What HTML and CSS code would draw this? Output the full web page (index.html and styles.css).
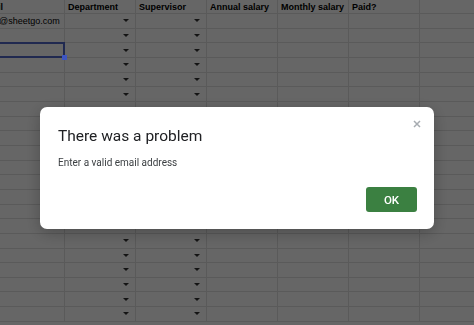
FILE: index.html
```html
<!DOCTYPE html>
<html lang="en">
<head>
    <meta charset="UTF-8">
    <meta name="viewport" content="width=device-width, initial-scale=1.0">
    <title>Employees - Sheet</title>
    <link rel="stylesheet" href="styles.css">
</head>
<body>
    <div class="sheet">
        <div class="row head">
            <div class="cell email">Email</div>
            <div class="cell">Department</div>
            <div class="cell">Supervisor</div>
            <div class="cell">Annual salary</div>
            <div class="cell">Monthly salary</div>
            <div class="cell">Paid?</div>
            <div class="cell last"></div>
        </div>
        <div class="row">
            <div class="cell email">mark@sheetgo.com</div>
            <div class="cell dd"><span class="arrow"></span></div>
            <div class="cell dd"><span class="arrow"></span></div>
            <div class="cell"></div><div class="cell"></div><div class="cell"></div><div class="cell last"></div>
        </div>
        <div class="row">
            <div class="cell email"></div>
            <div class="cell dd"><span class="arrow"></span></div>
            <div class="cell dd"><span class="arrow"></span></div>
            <div class="cell"></div><div class="cell"></div><div class="cell"></div><div class="cell last"></div>
        </div>
        <div class="row">
            <div class="cell email selected"><span class="handle"></span></div>
            <div class="cell dd"><span class="arrow"></span></div>
            <div class="cell dd"><span class="arrow"></span></div>
            <div class="cell"></div><div class="cell"></div><div class="cell"></div><div class="cell last"></div>
        </div>
        <div class="row">
            <div class="cell email"></div>
            <div class="cell dd"><span class="arrow"></span></div>
            <div class="cell dd"><span class="arrow"></span></div>
            <div class="cell"></div><div class="cell"></div><div class="cell"></div><div class="cell last"></div>
        </div>
        <div class="row">
            <div class="cell email"></div>
            <div class="cell dd"><span class="arrow"></span></div>
            <div class="cell dd"><span class="arrow"></span></div>
            <div class="cell"></div><div class="cell"></div><div class="cell"></div><div class="cell last"></div>
        </div>
        <div class="row">
            <div class="cell email"></div>
            <div class="cell dd"><span class="arrow"></span></div>
            <div class="cell dd"><span class="arrow"></span></div>
            <div class="cell"></div><div class="cell"></div><div class="cell"></div><div class="cell last"></div>
        </div>
        <div class="row">
            <div class="cell email"></div>
            <div class="cell dd"><span class="arrow"></span></div>
            <div class="cell dd"><span class="arrow"></span></div>
            <div class="cell"></div><div class="cell"></div><div class="cell"></div><div class="cell last"></div>
        </div>
        <div class="row">
            <div class="cell email"></div>
            <div class="cell dd"><span class="arrow"></span></div>
            <div class="cell dd"><span class="arrow"></span></div>
            <div class="cell"></div><div class="cell"></div><div class="cell"></div><div class="cell last"></div>
        </div>
        <div class="row">
            <div class="cell email"></div>
            <div class="cell dd"><span class="arrow"></span></div>
            <div class="cell dd"><span class="arrow"></span></div>
            <div class="cell"></div><div class="cell"></div><div class="cell"></div><div class="cell last"></div>
        </div>
        <div class="row">
            <div class="cell email"></div>
            <div class="cell dd"><span class="arrow"></span></div>
            <div class="cell dd"><span class="arrow"></span></div>
            <div class="cell"></div><div class="cell"></div><div class="cell"></div><div class="cell last"></div>
        </div>
        <div class="row">
            <div class="cell email"></div>
            <div class="cell dd"><span class="arrow"></span></div>
            <div class="cell dd"><span class="arrow"></span></div>
            <div class="cell"></div><div class="cell"></div><div class="cell"></div><div class="cell last"></div>
        </div>
        <div class="row">
            <div class="cell email"></div>
            <div class="cell dd"><span class="arrow"></span></div>
            <div class="cell dd"><span class="arrow"></span></div>
            <div class="cell"></div><div class="cell"></div><div class="cell"></div><div class="cell last"></div>
        </div>
        <div class="row">
            <div class="cell email"></div>
            <div class="cell dd"><span class="arrow"></span></div>
            <div class="cell dd"><span class="arrow"></span></div>
            <div class="cell"></div><div class="cell"></div><div class="cell"></div><div class="cell last"></div>
        </div>
        <div class="row">
            <div class="cell email"></div>
            <div class="cell dd"><span class="arrow"></span></div>
            <div class="cell dd"><span class="arrow"></span></div>
            <div class="cell"></div><div class="cell"></div><div class="cell"></div><div class="cell last"></div>
        </div>
        <div class="row">
            <div class="cell email"></div>
            <div class="cell dd"><span class="arrow"></span></div>
            <div class="cell dd"><span class="arrow"></span></div>
            <div class="cell"></div><div class="cell"></div><div class="cell"></div><div class="cell last"></div>
        </div>
        <div class="row">
            <div class="cell email"></div>
            <div class="cell dd"><span class="arrow"></span></div>
            <div class="cell dd"><span class="arrow"></span></div>
            <div class="cell"></div><div class="cell"></div><div class="cell"></div><div class="cell last"></div>
        </div>
        <div class="row">
            <div class="cell email"></div>
            <div class="cell dd"><span class="arrow"></span></div>
            <div class="cell dd"><span class="arrow"></span></div>
            <div class="cell"></div><div class="cell"></div><div class="cell"></div><div class="cell last"></div>
        </div>
        <div class="row">
            <div class="cell email"></div>
            <div class="cell dd"><span class="arrow"></span></div>
            <div class="cell dd"><span class="arrow"></span></div>
            <div class="cell"></div><div class="cell"></div><div class="cell"></div><div class="cell last"></div>
        </div>
        <div class="row">
            <div class="cell email"></div>
            <div class="cell dd"><span class="arrow"></span></div>
            <div class="cell dd"><span class="arrow"></span></div>
            <div class="cell"></div><div class="cell"></div><div class="cell"></div><div class="cell last"></div>
        </div>
        <div class="row">
            <div class="cell email"></div>
            <div class="cell dd"><span class="arrow"></span></div>
            <div class="cell dd"><span class="arrow"></span></div>
            <div class="cell"></div><div class="cell"></div><div class="cell"></div><div class="cell last"></div>
        </div>
        <div class="row">
            <div class="cell email"></div>
            <div class="cell dd"><span class="arrow"></span></div>
            <div class="cell dd"><span class="arrow"></span></div>
            <div class="cell"></div><div class="cell"></div><div class="cell"></div><div class="cell last"></div>
        </div>
    </div>

    <div class="overlay">
        <div class="dialog">
            <button class="close" aria-label="Close">
                <svg width="8" height="8" viewBox="0 0 8 8">
                    <path d="M1 1 L7 7 M7 1 L1 7" stroke="#a7acb1" stroke-width="1.5" fill="none"/>
                </svg>
            </button>
            <h2 class="dialog-title">There was a problem</h2>
            <p class="dialog-text">Enter a valid email address</p>
            <div class="dialog-actions">
                <button class="btn-ok">OK</button>
            </div>
        </div>
    </div>
</body>
</html>
```

FILE: styles.css
```css
html, body {
    margin: 0;
    padding: 0;
    height: 100%;
    overflow: hidden;
    background: #fff;
}
body {
    font-family: "Liberation Sans", Arial, sans-serif;
    font-size: 9px;
    color: #000;
}

/* spreadsheet behind the dialog, scrolled a little to the right */
.sheet {
    margin-left: -24px;
}
.row {
    display: flex;
    height: 14.67px;
    box-sizing: border-box;
    border-bottom: 1px solid #e0e0e0;
}
.row.head {
    height: 14px;
    font-weight: bold;
}
.cell {
    width: 71px;
    flex: none;
    box-sizing: border-box;
    border-right: 1px solid #e0e0e0;
    padding: 0 3px;
    display: flex;
    align-items: center;
    white-space: nowrap;
    overflow: hidden;
}
.cell.email {
    width: 89px;
}
.cell.last {
    flex: 1;
    border-right: none;
}
.cell.dd {
    justify-content: flex-end;
    padding-right: 6px;
}
.arrow {
    width: 0;
    height: 0;
    border-left: 3px solid transparent;
    border-right: 3px solid transparent;
    border-top: 3px solid #333;
}
.cell.selected {
    position: relative;
    overflow: visible;
}
.cell.selected::after {
    content: "";
    position: absolute;
    left: -1px;
    top: -1px;
    right: -1px;
    bottom: -1px;
    border: 2px solid #5066c8;
}
.handle {
    position: absolute;
    right: -3px;
    bottom: -3px;
    width: 5px;
    height: 5px;
    background: #3d55c0;
    z-index: 1;
}

/* modal */
.overlay {
    position: fixed;
    inset: 0;
    background: rgba(0, 0, 0, 0.6);
    display: flex;
    justify-content: center;
    align-items: flex-start;
    padding-top: 107px;
}
.dialog {
    position: relative;
    width: 394px;
    height: 122px;
    box-sizing: border-box;
    background: #fff;
    border-radius: 7px;
    padding: 19px 17px 17px 18px;
    font-family: Roboto, "Noto Sans", sans-serif;
    box-shadow: 0 4px 16px rgba(0, 0, 0, 0.25);
}
.close {
    position: absolute;
    top: 13px;
    right: 13px;
    width: 8px;
    height: 8px;
    padding: 0;
    border: none;
    background: none;
    cursor: pointer;
    display: flex;
}
.dialog-title {
    margin: 0;
    font-size: 15.5px;
    font-weight: normal;
    line-height: 20px;
    color: #202124;
}
.dialog-text {
    margin: 10px 0 0;
    font-size: 10px;
    line-height: 14px;
    color: #3c4043;
}
.dialog-actions {
    display: flex;
    justify-content: flex-end;
    margin-top: 17px;
}
.btn-ok {
    width: 51px;
    height: 25px;
    border: none;
    border-radius: 3px;
    background: #3b8041;
    color: #fff;
    font-family: Roboto, sans-serif;
    font-size: 11.5px;
    font-weight: 500;
    cursor: pointer;
}
```
